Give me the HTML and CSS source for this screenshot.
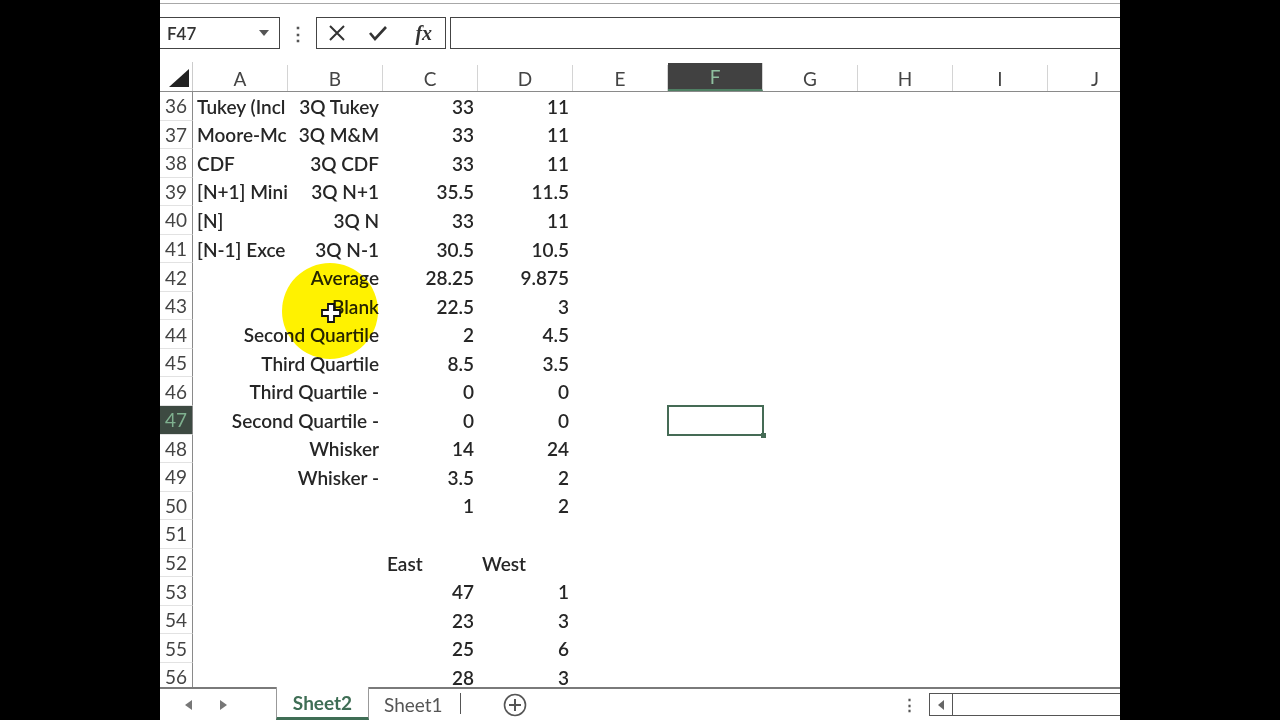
FILE: index.html
```html
<!DOCTYPE html>
<html lang="en">
<head>
  <meta charset="UTF-8">
  <title>Book1 - Excel</title>
  <link rel="stylesheet" href="styles.css">
</head>
<body>
  <div class="app">
    <div class="topline"></div>

    <!-- Name box + formula bar -->
    <div class="formula-row">
      <div class="namebox">
        <span>F47</span>
        <svg class="dd" width="10" height="6" viewBox="0 0 10 6"><path d="M0 0h10L5 6z" fill="#555"/></svg>
      </div>
      <div class="vdots">&#8942;</div>
      <div class="fbtns">
        <svg width="18" height="18" viewBox="0 0 18 18"><path d="M2 2L16 16M16 2L2 16" stroke="#333" stroke-width="2" fill="none"/></svg>
        <svg width="20" height="18" viewBox="0 0 20 18"><path d="M2 9l5 6L18 3" stroke="#333" stroke-width="2.6" fill="none"/></svg>
        <span class="fx">fx</span>
      </div>
      <div class="finput"></div>
    </div>

    <!-- Column headers -->
    <div class="colheads">
      <div class="corner"><svg width="20" height="18" viewBox="0 0 20 18"><path d="M20 0V18H0z" fill="#222"/></svg></div>
      <div class="ch">A</div><div class="ch">B</div><div class="ch">C</div><div class="ch">D</div><div class="ch">E</div>
      <div class="ch sel">F</div><div class="ch">G</div><div class="ch">H</div><div class="ch">I</div><div class="ch">J</div>
    </div>

    <!-- Sheet cells -->
    <div class="grid">
      <div class="row"><div class="rh">36</div><div class="c">Tukey (Incl</div><div class="c r">3Q Tukey</div><div class="c r">33</div><div class="c r">11</div></div>
      <div class="row"><div class="rh">37</div><div class="c">Moore-Mc</div><div class="c r">3Q M&amp;M</div><div class="c r">33</div><div class="c r">11</div></div>
      <div class="row"><div class="rh">38</div><div class="c">CDF</div><div class="c r">3Q CDF</div><div class="c r">33</div><div class="c r">11</div></div>
      <div class="row"><div class="rh">39</div><div class="c">[N+1] Mini</div><div class="c r">3Q N+1</div><div class="c r">35.5</div><div class="c r">11.5</div></div>
      <div class="row"><div class="rh">40</div><div class="c">[N]</div><div class="c r">3Q N</div><div class="c r">33</div><div class="c r">11</div></div>
      <div class="row"><div class="rh">41</div><div class="c">[N-1] Exce</div><div class="c r">3Q N-1</div><div class="c r">30.5</div><div class="c r">10.5</div></div>
      <div class="row"><div class="rh">42</div><div class="c r wide">Average</div><div class="c r">28.25</div><div class="c r">9.875</div></div>
      <div class="row"><div class="rh">43</div><div class="c r wide">Blank</div><div class="c r">22.5</div><div class="c r">3</div></div>
      <div class="row"><div class="rh">44</div><div class="c r wide">Second Quartile</div><div class="c r">2</div><div class="c r">4.5</div></div>
      <div class="row"><div class="rh">45</div><div class="c r wide">Third Quartile</div><div class="c r">8.5</div><div class="c r">3.5</div></div>
      <div class="row"><div class="rh">46</div><div class="c r wide">Third Quartile -</div><div class="c r">0</div><div class="c r">0</div></div>
      <div class="row"><div class="rh sel">47</div><div class="c r wide">Second Quartile -</div><div class="c r">0</div><div class="c r">0</div><div class="c"></div><div class="c active"></div></div>
      <div class="row"><div class="rh">48</div><div class="c r wide">Whisker</div><div class="c r">14</div><div class="c r">24</div></div>
      <div class="row"><div class="rh">49</div><div class="c r wide">Whisker -</div><div class="c r">3.5</div><div class="c r">2</div></div>
      <div class="row"><div class="rh">50</div><div class="c"></div><div class="c"></div><div class="c r">1</div><div class="c r">2</div></div>
      <div class="row"><div class="rh">51</div></div>
      <div class="row"><div class="rh">52</div><div class="c"></div><div class="c"></div><div class="c">East</div><div class="c">West</div></div>
      <div class="row"><div class="rh">53</div><div class="c"></div><div class="c"></div><div class="c r">47</div><div class="c r">1</div></div>
      <div class="row"><div class="rh">54</div><div class="c"></div><div class="c"></div><div class="c r">23</div><div class="c r">3</div></div>
      <div class="row"><div class="rh">55</div><div class="c"></div><div class="c"></div><div class="c r">25</div><div class="c r">6</div></div>
      <div class="row"><div class="rh">56</div><div class="c"></div><div class="c"></div><div class="c r">28</div><div class="c r">3</div></div>
    </div>

    <!-- Sheet tabs -->
    <div class="tabbar">
      <div class="nav">
        <svg width="8" height="10" viewBox="0 0 8 10"><path d="M7 0V10L0 5z" fill="#777"/></svg>
        <svg width="8" height="10" viewBox="0 0 8 10"><path d="M1 0V10L8 5z" fill="#777"/></svg>
      </div>
      <div class="tab active-tab">Sheet2</div>
      <div class="tab">Sheet1</div>
      <div class="tabsep"></div>
      <svg class="addsheet" width="24" height="24" viewBox="0 0 24 24"><circle cx="12" cy="12" r="10.5" stroke="#555" stroke-width="1.6" fill="none"/><path d="M12 6v12M6 12h12" stroke="#555" stroke-width="2"/></svg>
      <div class="spacer"></div>
      <div class="vdots small">&#8942;</div>
      <div class="hscroll"><div class="sbtn"><svg width="6" height="10" viewBox="0 0 6 10"><path d="M6 0V10L0 5z" fill="#666"/></svg></div></div>
    </div>

    <!-- presenter highlight + cursor -->
    <div class="spot"></div>
    <svg class="cursor" width="20" height="20" viewBox="0 0 20 20"><path d="M7 1h6v6h6v6h-6v6H7v-6H1V7h6z" fill="#fff" stroke="#111" stroke-width="1.8"/></svg>
  </div>
</body>
</html>
```

FILE: styles.css
```css
body {
  margin: 0;
  background: #000;
  display: flex;
  justify-content: center;
  font-family: Lato, "Open Sans", sans-serif;
  color: #262626;
}

.app {
  position: relative;
  width: 960px;
  height: 720px;
  background: #fff;
  display: flex;
  flex-direction: column;
  overflow: hidden;
}

.topline {
  height: 3px;
  border-bottom: 1px solid #a8a8a8;
}

/* formula bar */
.formula-row {
  display: flex;
  align-items: center;
  height: 34px;
  margin-top: 12px;
}

.namebox {
  width: 120px;
  height: 32px;
  border: 1px solid #444;
  border-left: none;
  display: flex;
  align-items: center;
  justify-content: space-between;
  padding: 0 10px 0 7px;
  box-sizing: border-box;
  font-size: 17px;
  font-weight: 600;
  color: #333;
}

.vdots {
  width: 36px;
  text-align: center;
  font-size: 18px;
  font-weight: bold;
  color: #555;
}

.fbtns {
  width: 130px;
  height: 32px;
  border: 1px solid #444;
  box-sizing: border-box;
  display: flex;
  align-items: center;
  justify-content: space-around;
  padding: 0 2px 0 0;
}

.fx {
  font-family: "Liberation Serif", serif;
  font-style: italic;
  font-weight: bold;
  font-size: 20px;
  color: #333;
  margin-left: 6px;
}

.finput {
  flex: 1;
  height: 32px;
  margin-left: 4px;
  border: 1px solid #444;
  border-right: none;
  box-sizing: border-box;
}

/* column headers */
.colheads {
  display: grid;
  grid-template-columns: 33px repeat(10, 95px);
  height: 29px;
  margin-top: 12px;
  border-bottom: 1px solid #8a8a8a;
  font-size: 19px;
  color: #444;
}

.corner {
  display: flex;
  align-items: flex-end;
  justify-content: flex-end;
  padding: 0 3px 4px 0;
  border-right: 1px solid #ccc;
}

.ch {
  display: flex;
  align-items: center;
  justify-content: center;
  border-right: 1px solid #d4d4d4;
  margin: 3px 0 0;
}

.ch.sel {
  background: #414141;
  color: #8fbf9f;
  margin: 1px 0 0;
  border-bottom: 2px solid #4f7f63;
}

/* cells */
.grid {
  height: 595px;
  overflow: hidden;
}

.row {
  display: grid;
  grid-template-columns: 33px repeat(10, 95px);
  height: 28.55px;
  font-size: 19px;
  font-weight: 600;
}

.rh {
  display: flex;
  align-items: center;
  justify-content: center;
  border-right: 1px solid #8a8a8a;
  border-bottom: 1px solid #e2e2e2;
  color: #444;
  font-size: 19px;
  font-weight: 400;
}

.rh.sel {
  background: #3d4a42;
  color: #7fb08f;
}

.c {
  display: flex;
  align-items: center;
  padding: 0 4px;
  white-space: nowrap;
  overflow: hidden;
}

.c.r {
  justify-content: flex-end;
}

.c.wide {
  grid-column: span 2;
}

.c.active {
  position: relative;
  overflow: visible;
  outline: 2px solid #456b55;
  outline-offset: -1px;
}

.c.active::after {
  content: "";
  position: absolute;
  right: -3px;
  bottom: -3px;
  width: 5px;
  height: 5px;
  background: #456b55;
}

/* sheet tabs */
.tabbar {
  height: 31px;
  border-top: 2px solid #7a7a7a;
  display: flex;
  align-items: stretch;
  font-size: 19px;
}

.nav {
  width: 116px;
  display: flex;
  align-items: center;
  padding-left: 25px;
  box-sizing: border-box;
  gap: 26px;
}

.tab {
  padding: 0 15px;
  display: flex;
  align-items: center;
  color: #555;
}

.active-tab {
  width: 93px;
  box-sizing: border-box;
  justify-content: center;
  background: #fff;
  border-left: 1px solid #999;
  border-right: 1px solid #999;
  border-bottom: 3px solid #3f6e55;
  color: #3f6e55;
  font-weight: bold;
  margin-top: -2px;
}

.tabsep {
  width: 1px;
  background: #555;
  margin: 4px 0 6px 2px;
}

.addsheet {
  align-self: center;
  margin-left: 42px;
}

.spacer {
  flex: 1;
}

.vdots.small {
  width: 20px;
  align-self: center;
  font-size: 15px;
}

.hscroll {
  width: 190px;
  margin: 4px 0 4px 10px;
  border: 1px solid #555;
  border-right: none;
  display: flex;
}

.sbtn {
  width: 22px;
  border-right: 1px solid #555;
  display: flex;
  align-items: center;
  justify-content: center;
}

/* presenter overlay */
.spot {
  position: absolute;
  left: 122px;
  top: 263px;
  width: 96px;
  height: 96px;
  border-radius: 50%;
  background: #fff200;
  mix-blend-mode: multiply;
}

.cursor {
  position: absolute;
  left: 161px;
  top: 303px;
}
```
